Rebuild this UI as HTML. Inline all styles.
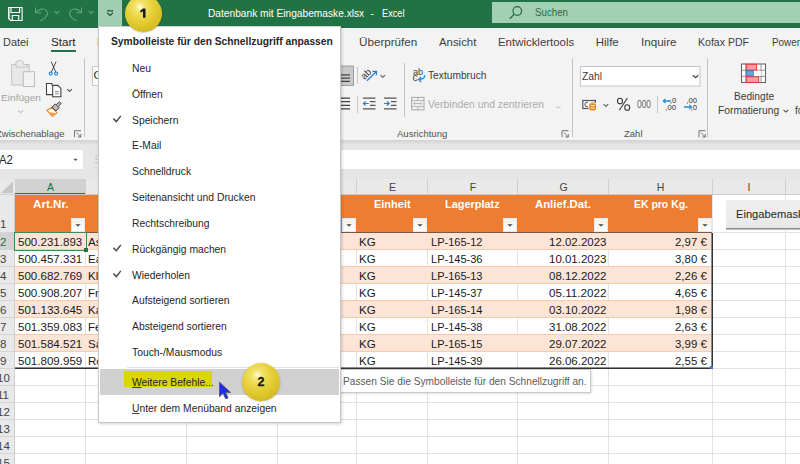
<!DOCTYPE html>
<html><head><meta charset="utf-8"><title>Excel</title>
<style>
html,body{margin:0;padding:0;}
body{width:800px;height:464px;overflow:hidden;position:relative;background:#fff;font-family:"Liberation Sans",sans-serif;}
.a{position:absolute;}
.t{position:absolute;white-space:nowrap;line-height:1;transform-origin:0 0;font-family:"Liberation Sans",sans-serif;}
svg{position:absolute;overflow:visible;}

</style></head><body>
<!-- title bar -->
<div class="a" style="left:0;top:0;width:800px;height:28px;background:#217346"></div>
<div class="a" style="left:98px;top:0;width:24px;height:26px;background:#a1cfb0"></div>
<div class="a" style="left:492px;top:2px;width:310px;height:21px;background:#a3d0b2"></div>
<div class="a" style="left:0;top:26px;width:800px;height:2px;background:#1f6f43"></div>
<div class="a" style="left:0;top:28px;width:800px;height:1px;background:#fafafa"></div>
<svg style="left:0;top:0" width="130" height="27">
 <g fill="none" stroke="#ffffff" stroke-width="1.1">
  <path d="M8.6 7.5h13.5v13h-11.5l-2-2z"/>
  <path d="M11 7.5v5h8.6v-5"/>
  <path d="M12.3 20.5v-5h6.4v5"/>
  <path d="M9.6 8.5v11" stroke-opacity="0.5"/>
 </g>
 <g fill="none" stroke="#62a37c" stroke-width="1.1">
  <path d="M35.5 7.5v5.2h5.5"/>
  <path d="M35.8 12.4c3-3.5 7.5-4.5 10.2-2 c2.3 2.3 1.4 5.2 -0.8 7.5l-5 3.2"/>
  <path d="M54.5 11.2l2.3 2.3l2.3-2.3"/>
  <path d="M81.5 7.5v5.2h-5.5"/>
  <path d="M81.2 12.4c-3-3.5 -7.5-4.5 -10.2-2 c-2.3 2.3 -1.4 5.2 0.8 7.5l5 3.2"/>
  <path d="M89 11.2l2.3 2.3l2.3-2.3"/>
 </g>
 <path d="M107 10.8h6.3" stroke="#1d5c37" stroke-width="1.3"/>
 <path d="M107.2 12.8l2.9 2.6l2.9-2.6" fill="none" stroke="#1d5c37" stroke-width="1.3"/>
</svg>
<svg style="left:500px;top:0" width="30" height="27">
 <circle cx="17.3" cy="11" r="4.3" fill="none" stroke="#2a6a43" stroke-width="1.2"/>
 <path d="M14.3 14.2l-4.6 4.6" stroke="#2a6a43" stroke-width="1.3"/>
</svg>
<!-- tabs + ribbon -->
<div class="a" style="left:0;top:28px;width:800px;height:112px;background:#f3f3f3"></div>
<div class="a" style="left:51px;top:50px;width:25px;height:2px;background:#217346"></div>
<!-- ribbon icons -->
<svg style="left:0;top:55px" width="800" height="90">
 <!-- separators -->
 <g fill="#c6c6c6">
  <rect x="84" y="3" width="1" height="79"/>
  <rect x="404" y="8" width="1" height="54"/>
  <rect x="572" y="3" width="1" height="79"/>
  <rect x="707" y="3" width="1" height="79"/>
  <rect x="357" y="12" width="1" height="17"/>
  <rect x="357" y="41" width="1" height="17"/>
  <rect x="657" y="41" width="1" height="17"/>
 </g>
 <!-- clipboard (disabled) -->
 <path d="M11.7 9.5h4.2v-1.6a2.2 2.2 0 0 1 2.2-2.2h3a2.2 2.2 0 0 1 2.2 2.2v1.6h5.9v20.5h-17.5z" fill="#e8e8e8" stroke="#c3c3c3" stroke-width="1"/>
 <path d="M16 9.5v2.6h11.2v-2.6" fill="none" stroke="#c3c3c3" stroke-width="1"/>
 <rect x="23.3" y="16.7" width="11.2" height="14.8" fill="#f2f2f2" stroke="#bdbdbd" stroke-width="1"/>
 <path d="M18 55.5l2.6 2.2l2.6-2.2" fill="none" stroke="#b0b0b0" stroke-width="1"/>
 <!-- scissors -->
 <path d="M51.2 6.6l4.6 10.6M56 6.6l-4.6 10.6" stroke="#3a3a3a" stroke-width="0.9" fill="none"/>
 <circle cx="50.7" cy="18.6" r="1.5" fill="none" stroke="#2b8ad8" stroke-width="1.2"/>
 <circle cx="56.2" cy="18.6" r="1.5" fill="none" stroke="#2b8ad8" stroke-width="1.2"/>
 <!-- copy -->
 <path d="M52.4 39.6h-5.9v-11.1h5.4v2" fill="#fff" stroke="#444" stroke-width="1.1"/>
 <path d="M52.7 30.4h5.2l3 3v8.4h-8.2z" fill="#fff" stroke="#444" stroke-width="1.1"/>
 <path d="M55 36.6h3.8M55 38.8h3.8" stroke="#777" stroke-width="0.9"/>
 <path d="M67.3 34.2l2.3 2.2l2.3-2.2" fill="none" stroke="#555" stroke-width="1.1"/>
 <!-- format painter -->
 <path d="M47 55.3l5.2-3l4.8 5.6l-4.6 3.5z" fill="#fff" stroke="#e8821e" stroke-width="1.1" stroke-linejoin="round"/>
 <path d="M49.5 57.2l6.6 0.9l-3.7 2.9z" fill="#f0a04a"/>
 <path d="M52 52.2l3.3-3.3l3.8 3.8l-3.3 3.3z" fill="#bdbdbd" stroke="#3a3a3a" stroke-width="1"/>
 <path d="M56.2 49.8l2.3-2.3a1.3 1.3 0 0 1 1.9 1.9l-2.3 2.3" fill="#bdbdbd" stroke="#3a3a3a" stroke-width="1"/>
 <!-- launchers -->
 <g fill="none" stroke="#666" stroke-width="0.9">
  <path d="M74.5 82.2v-6.5h6.5"/><path d="M76.5 77.7l4.2 4.2M77.8 82h3v-3"/>
  <path d="M562 82.2v-6.5h6.5"/><path d="M564 77.7l4.2 4.2M565.3 82h3v-3"/>
  <path d="M699 82.2v-6.5h6.5"/><path d="M701 77.7l4.2 4.2M702.3 82h3v-3"/>
 </g>
 <!-- font name box partial -->
 <rect x="92.5" y="11.5" width="10" height="19" fill="#fff" stroke="#c6c6c6"/>
 <!-- pressed align-right -->
 <rect x="335.5" y="11" width="18" height="19.5" fill="#c9c9c9" stroke="#9e9e9e"/>
 <path d="M341 19.9h9M341 23.1h9M341 26.3h9" stroke="#444" stroke-width="1.2"/>
 <path d="M341 43.2h9M341 46.7h9M341 50.3h9M341 53.9h9" stroke="#444" stroke-width="1.2"/>
 <!-- orientation -->
 <text x="0" y="0" transform="translate(364.6 25) rotate(-45)" font-family="Liberation Sans" font-size="9.5" fill="#333">ab</text>
 <path d="M367 25.7l9-9" stroke="#2b7cd3" stroke-width="1.3"/>
 <path d="M372.5 16.4h3.9v3.9" fill="none" stroke="#2b7cd3" stroke-width="1.3"/>
 <path d="M380.5 20.2l2.3 2.1l2.3-2.1" fill="none" stroke="#555" stroke-width="1.1"/>
 <!-- indent decrease -->
 <path d="M363 43.2h12.5M370 46.7h5.5M370 50.3h5.5M363 53.9h12.5" stroke="#555" stroke-width="1.2"/>
 <path d="M368.7 48.5h-5.2M365.6 46.3l-2.2 2.2l2.2 2.2" fill="none" stroke="#2b7cd3" stroke-width="1.2"/>
 <!-- indent increase -->
 <path d="M384 43.2h12.5M391 46.7h5.5M391 50.3h5.5M384 53.9h12.5" stroke="#555" stroke-width="1.2"/>
 <path d="M384 48.5h5.2M387 46.3l2.2 2.2l-2.2 2.2" fill="none" stroke="#2b7cd3" stroke-width="1.2"/>
 <!-- wrap text -->
 <text x="413" y="19.7" font-family="Liberation Sans" font-size="9.5" fill="#444" textLength="10.2" lengthAdjust="spacingAndGlyphs">ab</text>
 <text x="412.6" y="26.4" font-family="Liberation Sans" font-size="10.5" fill="#444">c</text>
 <path d="M424.5 20.2c0.6 2.6-1.3 4.3-5.4 4.3" fill="none" stroke="#2b8ad8" stroke-width="1.4"/>
 <path d="M421.2 22l-2.5 2.5l2.5 2.4" fill="none" stroke="#2b8ad8" stroke-width="1.4"/>
 <!-- merge (disabled) -->
 <rect x="411.6" y="42.4" width="12.4" height="12.4" fill="none" stroke="#adadad" stroke-width="1.1"/>
 <path d="M411.6 45.6h12.4M411.6 51.6h12.4M417.8 42.4v3.2M417.8 51.6v3.2" stroke="#adadad" stroke-width="0.9"/>
 <path d="M413.6 48.6h8.4M415.2 47l-1.6 1.6l1.6 1.6M420.4 47l1.6 1.6l-1.6 1.6" fill="none" stroke="#adadad" stroke-width="0.9"/>
 <path d="M556 51.2l2.3 2.1l2.3-2.1" fill="none" stroke="#bdbdbd" stroke-width="1"/>
 <!-- number format box -->
 <rect x="580.5" y="11.5" width="119.5" height="19.5" fill="#fff" stroke="#c6c6c6"/>
 <path d="M692.8 20.2l2.7 2.5l2.7-2.5" fill="none" stroke="#444" stroke-width="1.2"/>
 <!-- currency -->
 <rect x="582.8" y="45.5" width="12.6" height="8" fill="#fff" stroke="#555" stroke-width="1.2"/>
 <path d="M588 47.3a2.3 2.3 0 1 0 0 4.4" fill="none" stroke="#555" stroke-width="1.1"/>
 <path d="M591 47.3h4" stroke="#777" stroke-width="0.9"/>
 <rect x="588.6" y="47.6" width="8" height="8.6" rx="2" fill="#fff"/>
 <rect x="589.2" y="48.2" width="6.8" height="7.4" rx="1.8" fill="#e8821e"/>
 <path d="M590.5 50.6h4.2M590.5 53h4.2" stroke="#fff" stroke-width="1"/>
 <path d="M603.7 49.2l2.3 2.1l2.3-2.1" fill="none" stroke="#555" stroke-width="1.1"/>
 <!-- percent -->
 <ellipse cx="620" cy="46" rx="2.5" ry="2.8" fill="none" stroke="#3a3a3a" stroke-width="1.1"/>
 <ellipse cx="627.2" cy="52.5" rx="2.5" ry="2.8" fill="none" stroke="#3a3a3a" stroke-width="1.1"/>
 <path d="M627.4 43l-8 12.2" stroke="#3a3a3a" stroke-width="1.1"/>
 <!-- decimals -->
 <path d="M671 46h-7.6M665.5 43.9l-2.2 2.1l2.2 2.1" fill="none" stroke="#2b8ad8" stroke-width="1.3"/>
 <text x="670" y="47.6" font-family="Liberation Sans" font-size="7.6" fill="#2a2a2a">,0</text>
 <text x="665.3" y="54.8" font-family="Liberation Sans" font-size="7.6" fill="#2a2a2a">,00</text>
 <text x="686.3" y="47.6" font-family="Liberation Sans" font-size="7.6" fill="#2a2a2a">,00</text>
 <path d="M684 52h7.4M689.3 49.9l2.2 2.1l-2.2 2.1" fill="none" stroke="#2b8ad8" stroke-width="1.3"/>
 <text x="690.6" y="54.8" font-family="Liberation Sans" font-size="7.6" fill="#2a2a2a">,0</text>
 <!-- conditional formatting -->
 <rect x="741.5" y="9" width="24" height="18.5" fill="#fff" stroke="#666" stroke-width="1.1"/>
 <path d="M741.5 15.3h24M741.5 21.4h24M761 9v18.5M745.8 9v18.5" stroke="#888" stroke-width="0.9" fill="none"/>
 <rect x="746.3" y="9.3" width="10.3" height="5.8" fill="#ff9ca4" stroke="#e03a3a" stroke-width="1"/>
 <rect x="746.3" y="15.8" width="7.3" height="5.2" fill="#64a4dc" stroke="#2b78c8" stroke-width="0.9"/>
 <rect x="753.8" y="15.8" width="7" height="5.2" fill="#fff"/>
 <rect x="746.3" y="21.8" width="12.4" height="5.6" fill="#ff9ca4" stroke="#e03a3a" stroke-width="1"/>
 <path d="M783.6 55l2.3 2.1l2.3-2.1" fill="none" stroke="#555" stroke-width="1.1"/>
</svg>
<div class="a" style="left:0;top:140px;width:800px;height:5px;background:linear-gradient(#d2d2d2,#e6e6e6)"></div>
<!-- formula bar area -->
<div class="a" style="left:0;top:145px;width:800px;height:34px;background:#e6e6e6"></div>
<div class="a" style="left:0;top:150px;width:83px;height:19px;background:#fff"></div>
<div class="a" style="left:104px;top:150px;width:700px;height:19px;background:#fff"></div>
<!-- column header row -->
<div class="a" style="left:0;top:179px;width:800px;height:16px;background:#e9e9e9;border-bottom:0"></div>
<div class="a" style="left:15px;top:179px;width:71px;height:14px;background:#d2d2d2;border-bottom:2px solid #217346"></div>
<!-- row header column -->
<div class="a" style="left:0;top:195px;width:14px;height:269px;background:#e9e9e9"></div>
<div class="a" style="left:0;top:232px;width:14px;height:17px;background:#d2d2d2"></div>
<!-- GRID -->
<div class="a" style="left:14px;top:232px;width:786px;height:1px;background:#e2e2e2;"></div>
<div class="a" style="left:14px;top:249px;width:786px;height:1px;background:#e2e2e2;"></div>
<div class="a" style="left:14px;top:266px;width:786px;height:1px;background:#e2e2e2;"></div>
<div class="a" style="left:14px;top:283px;width:786px;height:1px;background:#e2e2e2;"></div>
<div class="a" style="left:14px;top:300px;width:786px;height:1px;background:#e2e2e2;"></div>
<div class="a" style="left:14px;top:317px;width:786px;height:1px;background:#e2e2e2;"></div>
<div class="a" style="left:14px;top:334px;width:786px;height:1px;background:#e2e2e2;"></div>
<div class="a" style="left:14px;top:351px;width:786px;height:1px;background:#e2e2e2;"></div>
<div class="a" style="left:14px;top:368px;width:786px;height:1px;background:#e2e2e2;"></div>
<div class="a" style="left:14px;top:385px;width:786px;height:1px;background:#e2e2e2;"></div>
<div class="a" style="left:14px;top:402px;width:786px;height:1px;background:#e2e2e2;"></div>
<div class="a" style="left:14px;top:419px;width:786px;height:1px;background:#e2e2e2;"></div>
<div class="a" style="left:14px;top:436px;width:786px;height:1px;background:#e2e2e2;"></div>
<div class="a" style="left:14px;top:453px;width:786px;height:1px;background:#e2e2e2;"></div>
<div class="a" style="left:85px;top:195px;width:1px;height:269px;background:#e2e2e2;"></div>
<div class="a" style="left:186px;top:195px;width:1px;height:269px;background:#e2e2e2;"></div>
<div class="a" style="left:277px;top:195px;width:1px;height:269px;background:#e2e2e2;"></div>
<div class="a" style="left:356px;top:195px;width:1px;height:269px;background:#e2e2e2;"></div>
<div class="a" style="left:427px;top:195px;width:1px;height:269px;background:#e2e2e2;"></div>
<div class="a" style="left:517px;top:195px;width:1px;height:269px;background:#e2e2e2;"></div>
<div class="a" style="left:608px;top:195px;width:1px;height:269px;background:#e2e2e2;"></div>
<div class="a" style="left:712px;top:195px;width:1px;height:269px;background:#e2e2e2;"></div>
<div class="a" style="left:785px;top:195px;width:1px;height:269px;background:#e2e2e2;"></div>
<div class="a" style="left:85px;top:179px;width:1px;height:15px;background:#cfcfcf;"></div>
<div class="a" style="left:186px;top:179px;width:1px;height:15px;background:#cfcfcf;"></div>
<div class="a" style="left:277px;top:179px;width:1px;height:15px;background:#cfcfcf;"></div>
<div class="a" style="left:356px;top:179px;width:1px;height:15px;background:#cfcfcf;"></div>
<div class="a" style="left:427px;top:179px;width:1px;height:15px;background:#cfcfcf;"></div>
<div class="a" style="left:517px;top:179px;width:1px;height:15px;background:#cfcfcf;"></div>
<div class="a" style="left:608px;top:179px;width:1px;height:15px;background:#cfcfcf;"></div>
<div class="a" style="left:712px;top:179px;width:1px;height:15px;background:#cfcfcf;"></div>
<div class="a" style="left:785px;top:179px;width:1px;height:15px;background:#cfcfcf;"></div>
<div class="a" style="left:0px;top:194px;width:800px;height:1px;background:#cdcdcd;"></div>
<div class="a" style="left:0px;top:232px;width:14px;height:1px;background:#d4d4d4;"></div>
<div class="a" style="left:0px;top:249px;width:14px;height:1px;background:#d4d4d4;"></div>
<div class="a" style="left:0px;top:266px;width:14px;height:1px;background:#d4d4d4;"></div>
<div class="a" style="left:0px;top:283px;width:14px;height:1px;background:#d4d4d4;"></div>
<div class="a" style="left:0px;top:300px;width:14px;height:1px;background:#d4d4d4;"></div>
<div class="a" style="left:0px;top:317px;width:14px;height:1px;background:#d4d4d4;"></div>
<div class="a" style="left:0px;top:334px;width:14px;height:1px;background:#d4d4d4;"></div>
<div class="a" style="left:0px;top:351px;width:14px;height:1px;background:#d4d4d4;"></div>
<div class="a" style="left:0px;top:368px;width:14px;height:1px;background:#d4d4d4;"></div>
<div class="a" style="left:0px;top:385px;width:14px;height:1px;background:#d4d4d4;"></div>
<div class="a" style="left:0px;top:402px;width:14px;height:1px;background:#d4d4d4;"></div>
<div class="a" style="left:0px;top:419px;width:14px;height:1px;background:#d4d4d4;"></div>
<div class="a" style="left:0px;top:436px;width:14px;height:1px;background:#d4d4d4;"></div>
<div class="a" style="left:0px;top:453px;width:14px;height:1px;background:#d4d4d4;"></div>
<div class="a" style="left:14px;top:195px;width:1px;height:269px;background:#cdcdcd;"></div>
<div class="a" style="left:15px;top:195px;width:697px;height:37px;background:#ed7d31;"></div>
<div class="a" style="left:15px;top:232px;width:697px;height:1px;background:#7a5844;"></div>
<div class="a" style="left:15px;top:233px;width:697px;height:16px;background:#fce4d6;"></div>
<div class="a" style="left:15px;top:249px;width:697px;height:1px;background:#f8cbad;"></div>
<div class="a" style="left:15px;top:266px;width:697px;height:1px;background:#f8cbad;"></div>
<div class="a" style="left:15px;top:267px;width:697px;height:16px;background:#fce4d6;"></div>
<div class="a" style="left:15px;top:283px;width:697px;height:1px;background:#f8cbad;"></div>
<div class="a" style="left:15px;top:300px;width:697px;height:1px;background:#f8cbad;"></div>
<div class="a" style="left:15px;top:301px;width:697px;height:16px;background:#fce4d6;"></div>
<div class="a" style="left:15px;top:317px;width:697px;height:1px;background:#f8cbad;"></div>
<div class="a" style="left:15px;top:334px;width:697px;height:1px;background:#f8cbad;"></div>
<div class="a" style="left:15px;top:335px;width:697px;height:16px;background:#fce4d6;"></div>
<div class="a" style="left:15px;top:351px;width:697px;height:1px;background:#f8cbad;"></div>
<div class="a" style="left:15px;top:368px;width:697px;height:1px;background:#f8cbad;"></div>
<div class="a" style="left:85px;top:250px;width:1px;height:16px;background:#e2e2e2;"></div>
<div class="a" style="left:186px;top:250px;width:1px;height:16px;background:#e2e2e2;"></div>
<div class="a" style="left:277px;top:250px;width:1px;height:16px;background:#e2e2e2;"></div>
<div class="a" style="left:356px;top:250px;width:1px;height:16px;background:#e2e2e2;"></div>
<div class="a" style="left:427px;top:250px;width:1px;height:16px;background:#e2e2e2;"></div>
<div class="a" style="left:517px;top:250px;width:1px;height:16px;background:#e2e2e2;"></div>
<div class="a" style="left:85px;top:284px;width:1px;height:16px;background:#e2e2e2;"></div>
<div class="a" style="left:186px;top:284px;width:1px;height:16px;background:#e2e2e2;"></div>
<div class="a" style="left:277px;top:284px;width:1px;height:16px;background:#e2e2e2;"></div>
<div class="a" style="left:356px;top:284px;width:1px;height:16px;background:#e2e2e2;"></div>
<div class="a" style="left:427px;top:284px;width:1px;height:16px;background:#e2e2e2;"></div>
<div class="a" style="left:517px;top:284px;width:1px;height:16px;background:#e2e2e2;"></div>
<div class="a" style="left:85px;top:318px;width:1px;height:16px;background:#e2e2e2;"></div>
<div class="a" style="left:186px;top:318px;width:1px;height:16px;background:#e2e2e2;"></div>
<div class="a" style="left:277px;top:318px;width:1px;height:16px;background:#e2e2e2;"></div>
<div class="a" style="left:356px;top:318px;width:1px;height:16px;background:#e2e2e2;"></div>
<div class="a" style="left:427px;top:318px;width:1px;height:16px;background:#e2e2e2;"></div>
<div class="a" style="left:517px;top:318px;width:1px;height:16px;background:#e2e2e2;"></div>
<div class="a" style="left:85px;top:352px;width:1px;height:16px;background:#e2e2e2;"></div>
<div class="a" style="left:186px;top:352px;width:1px;height:16px;background:#e2e2e2;"></div>
<div class="a" style="left:277px;top:352px;width:1px;height:16px;background:#e2e2e2;"></div>
<div class="a" style="left:356px;top:352px;width:1px;height:16px;background:#e2e2e2;"></div>
<div class="a" style="left:427px;top:352px;width:1px;height:16px;background:#e2e2e2;"></div>
<div class="a" style="left:517px;top:352px;width:1px;height:16px;background:#e2e2e2;"></div>
<div class="a" style="left:15px;top:367px;width:698px;height:1px;background:#8c8c8c;"></div>
<div class="a" style="left:15px;top:368px;width:698px;height:1px;background:#333333;"></div>
<div class="a" style="left:711px;top:233px;width:1px;height:135px;background:#8c8c8c;"></div>
<div class="a" style="left:712px;top:233px;width:1px;height:135px;background:#333333;"></div>
<div class="a" style="left:709.5px;top:365.5px;width:3.5px;height:3.5px;background:#4a6fd8;"></div>
<div class="a" style="left:71px;top:218px;width:14px;height:14px;background:linear-gradient(#eef1f4,#ffffff);box-shadow:inset 0 0 0 1px #e6e9ec"></div>
<svg style="left:71px;top:218px" width="14" height="14"><path d="M4.3 6.3h5.4l-2.7 2.3z" fill="#444"/></svg>
<div class="a" style="left:172px;top:218px;width:14px;height:14px;background:linear-gradient(#eef1f4,#ffffff);box-shadow:inset 0 0 0 1px #e6e9ec"></div>
<svg style="left:172px;top:218px" width="14" height="14"><path d="M4.3 6.3h5.4l-2.7 2.3z" fill="#444"/></svg>
<div class="a" style="left:263px;top:218px;width:14px;height:14px;background:linear-gradient(#eef1f4,#ffffff);box-shadow:inset 0 0 0 1px #e6e9ec"></div>
<svg style="left:263px;top:218px" width="14" height="14"><path d="M4.3 6.3h5.4l-2.7 2.3z" fill="#444"/></svg>
<div class="a" style="left:342px;top:218px;width:14px;height:14px;background:linear-gradient(#eef1f4,#ffffff);box-shadow:inset 0 0 0 1px #e6e9ec"></div>
<svg style="left:342px;top:218px" width="14" height="14"><path d="M4.3 6.3h5.4l-2.7 2.3z" fill="#444"/></svg>
<div class="a" style="left:413px;top:218px;width:14px;height:14px;background:linear-gradient(#eef1f4,#ffffff);box-shadow:inset 0 0 0 1px #e6e9ec"></div>
<svg style="left:413px;top:218px" width="14" height="14"><path d="M4.3 6.3h5.4l-2.7 2.3z" fill="#444"/></svg>
<div class="a" style="left:503px;top:218px;width:14px;height:14px;background:linear-gradient(#eef1f4,#ffffff);box-shadow:inset 0 0 0 1px #e6e9ec"></div>
<svg style="left:503px;top:218px" width="14" height="14"><path d="M4.3 6.3h5.4l-2.7 2.3z" fill="#444"/></svg>
<div class="a" style="left:594px;top:218px;width:14px;height:14px;background:linear-gradient(#eef1f4,#ffffff);box-shadow:inset 0 0 0 1px #e6e9ec"></div>
<svg style="left:594px;top:218px" width="14" height="14"><path d="M4.3 6.3h5.4l-2.7 2.3z" fill="#444"/></svg>
<div class="a" style="left:698px;top:218px;width:14px;height:14px;background:linear-gradient(#eef1f4,#ffffff);box-shadow:inset 0 0 0 1px #e6e9ec"></div>
<svg style="left:698px;top:218px" width="14" height="14"><path d="M4.3 6.3h5.4l-2.7 2.3z" fill="#444"/></svg>
<div class="a" style="left:14px;top:232px;width:70.5px;height:16.5px;background:transparent;border:1.5px solid #3d8a5a;box-sizing:content-box"></div>
<div class="a" style="left:84px;top:248px;width:3.5px;height:3.5px;background:#217346;"></div>
<!-- select all triangle -->
<svg style="left:0;top:179px" width="15" height="16"><path d="M13 2.5v11.5h-12z" fill="#c6c6c6"/></svg>
<svg style="left:0;top:145px" width="110" height="34">
 <path d="M73.3 13.8h4.4l-2.2 2.2z" fill="#555"/>
 <g fill="#a8a8a8"><rect x="95.5" y="10" width="1.2" height="1.2"/><rect x="95.5" y="13.5" width="1.2" height="1.2"/><rect x="95.5" y="17" width="1.2" height="1.2"/></g>
</svg>
<!-- Eingabemaske button -->
<div class="a" style="left:726px;top:200px;width:80px;height:28px;background:linear-gradient(#f0f0f0,#e8e8e8);border-bottom:1px solid #8a8a8a;box-shadow:0 1px 0 #c0c0c0"></div>
<div class="t" style="left:208.30px;top:8.11px;font-size:10.5px;color:#ffffff;transform:scaleX(0.9697);">Datenbank mit Eingabemaske.xlsx</div>
<div class="t" style="left:370.50px;top:8.11px;font-size:10.5px;color:#ffffff;">-</div>
<div class="t" style="left:381.50px;top:8.11px;font-size:10.5px;color:#ffffff;transform:scaleX(0.8763);">Excel</div>
<div class="t" style="left:535.00px;top:8.40px;font-size:10.4px;color:#2b6a44;transform:scaleX(0.9364);">Suchen</div>
<div class="t" style="left:2.50px;top:36.87px;font-size:11.5px;color:#404040;transform:scaleX(0.9498);">Datei</div>
<div class="t" style="left:51.00px;top:36.87px;font-size:11.5px;color:#262626;transform:scaleX(1.0088);">Start</div>
<div class="t" style="left:359.40px;top:36.87px;font-size:11.5px;color:#404040;transform:scaleX(1.0133);">Überprüfen</div>
<div class="t" style="left:438.75px;top:36.87px;font-size:11.5px;color:#404040;transform:scaleX(0.9891);">Ansicht</div>
<div class="t" style="left:497.50px;top:36.87px;font-size:11.5px;color:#404040;transform:scaleX(0.9936);">Entwicklertools</div>
<div class="t" style="left:595.75px;top:36.87px;font-size:11.5px;color:#404040;">Hilfe</div>
<div class="t" style="left:640.50px;top:36.87px;font-size:11.5px;color:#404040;transform:scaleX(1.0096);">Inquire</div>
<div class="t" style="left:698.00px;top:36.87px;font-size:11.5px;color:#404040;transform:scaleX(0.9172);">Kofax PDF</div>
<div class="t" style="left:772.00px;top:36.87px;font-size:11.5px;color:#404040;transform:scaleX(0.8600);">Power Pivot</div>
<div class="t" style="left:1.00px;top:92.90px;font-size:9.8px;color:#a3a3a3;transform:scaleX(1.0342);">Einfügen</div>
<div class="t" style="left:96.50px;top:36.87px;font-size:11.5px;color:#404040;transform:scaleX(0.9912);">Einfügen</div>
<div class="t" style="left:-4.50px;top:128.57px;font-size:9.6px;color:#505050;transform:scaleX(0.9880);">Zwischenablage</div>
<div class="t" style="left:428.30px;top:71.47px;font-size:10.2px;color:#3b3b3b;transform:scaleX(1.0031);">Textumbruch</div>
<div class="t" style="left:428.00px;top:100.27px;font-size:10.2px;color:#acacac;transform:scaleX(1.0190);">Verbinden und zentrieren</div>
<div class="t" style="left:396.50px;top:128.64px;font-size:9.4px;color:#505050;transform:scaleX(1.0140);">Ausrichtung</div>
<div class="t" style="left:582.00px;top:70.76px;font-size:10.8px;color:#3b3b3b;transform:scaleX(0.9522);">Zahl</div>
<div class="t" style="left:637.00px;top:99.58px;font-size:10.3px;color:#606060;transform:scaleX(0.8149);">000</div>
<div class="t" style="left:623.70px;top:128.74px;font-size:9.4px;color:#505050;transform:scaleX(1.0144);">Zahl</div>
<div class="t" style="left:733.90px;top:91.11px;font-size:10.5px;color:#3b3b3b;transform:scaleX(0.9674);">Bedingte</div>
<div class="t" style="left:718.40px;top:104.61px;font-size:10.5px;color:#3b3b3b;transform:scaleX(0.9785);">Formatierung</div>
<div class="t" style="left:794.60px;top:104.61px;font-size:10.5px;color:#3b3b3b;transform:scaleX(0.9300);">fo</div>
<div class="t" style="left:-1.00px;top:153.84px;font-size:12px;color:#262626;transform:scaleX(0.9500);">A2</div>
<div class="t" style="left:47.00px;top:182.11px;font-size:10.5px;color:#217346;">A</div>
<div class="t" style="left:389.00px;top:182.11px;font-size:10.5px;color:#444444;">E</div>
<div class="t" style="left:469.79px;top:182.11px;font-size:10.5px;color:#444444;">F</div>
<div class="t" style="left:559.42px;top:182.11px;font-size:10.5px;color:#444444;">G</div>
<div class="t" style="left:656.71px;top:182.11px;font-size:10.5px;color:#444444;">H</div>
<div class="t" style="left:747.54px;top:182.11px;font-size:10.5px;color:#444444;">I</div>
<div class="t" style="left:32.75px;top:199.11px;font-size:10.5px;color:#ffffff;font-weight:bold;transform:scaleX(1.1063);">Art.Nr.</div>
<div class="t" style="left:373.70px;top:199.11px;font-size:10.5px;color:#ffffff;font-weight:bold;transform:scaleX(1.0457);">Einheit</div>
<div class="t" style="left:445.00px;top:199.11px;font-size:10.5px;color:#ffffff;font-weight:bold;transform:scaleX(1.0398);">Lagerplatz</div>
<div class="t" style="left:535.00px;top:199.11px;font-size:10.5px;color:#ffffff;font-weight:bold;transform:scaleX(1.0786);">Anlief.Dat.</div>
<div class="t" style="left:633.60px;top:199.11px;font-size:10.5px;color:#ffffff;font-weight:bold;transform:scaleX(0.9954);">EK pro Kg.</div>
<div class="t" style="left:735.60px;top:209.47px;font-size:11.5px;color:#262626;transform:scaleX(0.9700);">Eingabemaske</div>
<div class="t" style="left:93.50px;top:70.27px;font-size:11.5px;color:#333333;">C</div>
<div class="t" style="left:-0.21px;top:219.19px;font-size:11px;color:#444444;transform:scaleX(1.0500);">1</div>
<div class="t" style="left:-0.21px;top:236.89px;font-size:11px;color:#217346;transform:scaleX(1.0500);">2</div>
<div class="t" style="left:-0.21px;top:253.89px;font-size:11px;color:#444444;transform:scaleX(1.0500);">3</div>
<div class="t" style="left:-0.21px;top:270.89px;font-size:11px;color:#444444;transform:scaleX(1.0500);">4</div>
<div class="t" style="left:-0.21px;top:287.89px;font-size:11px;color:#444444;transform:scaleX(1.0500);">5</div>
<div class="t" style="left:-0.21px;top:304.89px;font-size:11px;color:#444444;transform:scaleX(1.0500);">6</div>
<div class="t" style="left:-0.21px;top:321.89px;font-size:11px;color:#444444;transform:scaleX(1.0500);">7</div>
<div class="t" style="left:-0.21px;top:338.89px;font-size:11px;color:#444444;transform:scaleX(1.0500);">8</div>
<div class="t" style="left:-0.21px;top:355.89px;font-size:11px;color:#444444;transform:scaleX(1.0500);">9</div>
<div class="t" style="left:-3.42px;top:372.89px;font-size:11px;color:#444444;transform:scaleX(1.0500);">10</div>
<div class="t" style="left:-2.99px;top:389.89px;font-size:11px;color:#444444;transform:scaleX(1.0500);">11</div>
<div class="t" style="left:-3.42px;top:406.89px;font-size:11px;color:#444444;transform:scaleX(1.0500);">12</div>
<div class="t" style="left:-3.42px;top:423.89px;font-size:11px;color:#444444;transform:scaleX(1.0500);">13</div>
<div class="t" style="left:-3.42px;top:440.89px;font-size:11px;color:#444444;transform:scaleX(1.0500);">14</div>
<div class="t" style="left:-3.42px;top:457.89px;font-size:11px;color:#444444;transform:scaleX(1.0500);">15</div>
<div class="t" style="left:17.50px;top:236.89px;font-size:11px;color:#1a1a1a;transform:scaleX(1.0511);">500.231.893</div>
<div class="t" style="left:88.00px;top:236.89px;font-size:11px;color:#1a1a1a;transform:scaleX(1.0500);">As</div>
<div class="t" style="left:358.75px;top:236.89px;font-size:11px;color:#1a1a1a;transform:scaleX(1.0500);">KG</div>
<div class="t" style="left:430.50px;top:236.89px;font-size:11px;color:#1a1a1a;transform:scaleX(1.0025);">LP-165-12</div>
<div class="t" style="left:548.75px;top:236.89px;font-size:11px;color:#1a1a1a;transform:scaleX(1.0444);">12.02.2023</div>
<div class="t" style="left:674.50px;top:236.89px;font-size:11px;color:#1a1a1a;transform:scaleX(1.0382);">2,97 €</div>
<div class="t" style="left:17.50px;top:253.89px;font-size:11px;color:#1a1a1a;transform:scaleX(1.0511);">500.457.331</div>
<div class="t" style="left:88.00px;top:253.89px;font-size:11px;color:#1a1a1a;transform:scaleX(1.0500);">Ea</div>
<div class="t" style="left:358.75px;top:253.89px;font-size:11px;color:#1a1a1a;transform:scaleX(1.0500);">KG</div>
<div class="t" style="left:430.50px;top:253.89px;font-size:11px;color:#1a1a1a;transform:scaleX(1.0025);">LP-145-36</div>
<div class="t" style="left:548.75px;top:253.89px;font-size:11px;color:#1a1a1a;transform:scaleX(1.0444);">10.01.2023</div>
<div class="t" style="left:674.50px;top:253.89px;font-size:11px;color:#1a1a1a;transform:scaleX(1.0382);">3,80 €</div>
<div class="t" style="left:17.50px;top:270.89px;font-size:11px;color:#1a1a1a;transform:scaleX(1.0511);">500.682.769</div>
<div class="t" style="left:88.00px;top:270.89px;font-size:11px;color:#1a1a1a;transform:scaleX(1.0500);">Kl</div>
<div class="t" style="left:358.75px;top:270.89px;font-size:11px;color:#1a1a1a;transform:scaleX(1.0500);">KG</div>
<div class="t" style="left:430.50px;top:270.89px;font-size:11px;color:#1a1a1a;transform:scaleX(1.0025);">LP-165-13</div>
<div class="t" style="left:548.75px;top:270.89px;font-size:11px;color:#1a1a1a;transform:scaleX(1.0444);">08.12.2022</div>
<div class="t" style="left:674.50px;top:270.89px;font-size:11px;color:#1a1a1a;transform:scaleX(1.0382);">2,26 €</div>
<div class="t" style="left:17.50px;top:287.89px;font-size:11px;color:#1a1a1a;transform:scaleX(1.0511);">500.908.207</div>
<div class="t" style="left:88.00px;top:287.89px;font-size:11px;color:#1a1a1a;transform:scaleX(1.0500);">Fr</div>
<div class="t" style="left:358.75px;top:287.89px;font-size:11px;color:#1a1a1a;transform:scaleX(1.0500);">KG</div>
<div class="t" style="left:430.50px;top:287.89px;font-size:11px;color:#1a1a1a;transform:scaleX(1.0025);">LP-145-37</div>
<div class="t" style="left:548.75px;top:287.89px;font-size:11px;color:#1a1a1a;transform:scaleX(1.0602);">05.11.2022</div>
<div class="t" style="left:674.50px;top:287.89px;font-size:11px;color:#1a1a1a;transform:scaleX(1.0382);">4,65 €</div>
<div class="t" style="left:17.50px;top:304.89px;font-size:11px;color:#1a1a1a;transform:scaleX(1.0511);">501.133.645</div>
<div class="t" style="left:88.00px;top:304.89px;font-size:11px;color:#1a1a1a;transform:scaleX(1.0500);">Ka</div>
<div class="t" style="left:358.75px;top:304.89px;font-size:11px;color:#1a1a1a;transform:scaleX(1.0500);">KG</div>
<div class="t" style="left:430.50px;top:304.89px;font-size:11px;color:#1a1a1a;transform:scaleX(1.0025);">LP-165-14</div>
<div class="t" style="left:548.75px;top:304.89px;font-size:11px;color:#1a1a1a;transform:scaleX(1.0444);">03.10.2022</div>
<div class="t" style="left:674.50px;top:304.89px;font-size:11px;color:#1a1a1a;transform:scaleX(1.0382);">1,98 €</div>
<div class="t" style="left:17.50px;top:321.89px;font-size:11px;color:#1a1a1a;transform:scaleX(1.0511);">501.359.083</div>
<div class="t" style="left:88.00px;top:321.89px;font-size:11px;color:#1a1a1a;transform:scaleX(1.0500);">Fe</div>
<div class="t" style="left:358.75px;top:321.89px;font-size:11px;color:#1a1a1a;transform:scaleX(1.0500);">KG</div>
<div class="t" style="left:430.50px;top:321.89px;font-size:11px;color:#1a1a1a;transform:scaleX(1.0025);">LP-145-38</div>
<div class="t" style="left:548.75px;top:321.89px;font-size:11px;color:#1a1a1a;transform:scaleX(1.0444);">31.08.2022</div>
<div class="t" style="left:674.50px;top:321.89px;font-size:11px;color:#1a1a1a;transform:scaleX(1.0382);">2,63 €</div>
<div class="t" style="left:17.50px;top:338.89px;font-size:11px;color:#1a1a1a;transform:scaleX(1.0511);">501.584.521</div>
<div class="t" style="left:88.00px;top:338.89px;font-size:11px;color:#1a1a1a;transform:scaleX(1.0500);">Sa</div>
<div class="t" style="left:358.75px;top:338.89px;font-size:11px;color:#1a1a1a;transform:scaleX(1.0500);">KG</div>
<div class="t" style="left:430.50px;top:338.89px;font-size:11px;color:#1a1a1a;transform:scaleX(1.0025);">LP-165-15</div>
<div class="t" style="left:548.75px;top:338.89px;font-size:11px;color:#1a1a1a;transform:scaleX(1.0444);">29.07.2022</div>
<div class="t" style="left:674.50px;top:338.89px;font-size:11px;color:#1a1a1a;transform:scaleX(1.0382);">3,99 €</div>
<div class="t" style="left:17.50px;top:355.89px;font-size:11px;color:#1a1a1a;transform:scaleX(1.0511);">501.809.959</div>
<div class="t" style="left:88.00px;top:355.89px;font-size:11px;color:#1a1a1a;transform:scaleX(1.0500);">Ro</div>
<div class="t" style="left:358.75px;top:355.89px;font-size:11px;color:#1a1a1a;transform:scaleX(1.0500);">KG</div>
<div class="t" style="left:430.50px;top:355.89px;font-size:11px;color:#1a1a1a;transform:scaleX(1.0025);">LP-145-39</div>
<div class="t" style="left:548.75px;top:355.89px;font-size:11px;color:#1a1a1a;transform:scaleX(1.0444);">26.06.2022</div>
<div class="t" style="left:674.50px;top:355.89px;font-size:11px;color:#1a1a1a;transform:scaleX(1.0382);">2,55 €</div>
<!-- tooltip -->
<div class="a" style="left:339px;top:369px;width:250px;height:22px;background:#fff;border:1px solid #cacaca;box-shadow:1px 1px 2px rgba(0,0,0,0.12)"></div>
<!-- menu -->
<div class="a" style="left:98px;top:26px;width:241px;height:395px;background:#fff;border:1px solid #c6c6c6;border-top:1px solid #d0d0d0;box-shadow:1px 1px 3px rgba(0,0,0,0.18)"></div>
<div class="a" style="left:100px;top:369px;width:239px;height:25.5px;background:#d0d0d0"></div>
<div class="a" style="left:127px;top:367px;width:212px;height:1px;background:#e1e1e1"></div>
<div class="a" style="left:123.6px;top:371px;width:88.6px;height:15.6px;background:#d8d800"></div>
<svg style="left:0;top:0" width="400" height="464"><path d="M113.4 118.6L116.3 121.6L120.8 115.9" fill="none" stroke="#444" stroke-width="1.4"/><path d="M113.4 247.7L116.3 250.7L120.8 245.0" fill="none" stroke="#444" stroke-width="1.4"/><path d="M113.4 273.6L116.3 276.6L120.8 270.9" fill="none" stroke="#444" stroke-width="1.4"/>
<rect x="132" y="387" width="9.5" height="0.9" fill="#333"/>
<rect x="132" y="413" width="7.5" height="0.9" fill="#333"/>
</svg>
<div class="t" style="left:111.20px;top:35.69px;font-size:11px;color:#262626;font-weight:bold;transform:scaleX(0.9328);">Symbolleiste für den Schnellzugriff anpassen</div>
<div class="t" style="left:131.70px;top:62.99px;font-size:11px;color:#262626;transform:scaleX(0.9384);">Neu</div>
<div class="t" style="left:131.70px;top:88.81px;font-size:11px;color:#262626;transform:scaleX(0.9384);">Öffnen</div>
<div class="t" style="left:131.70px;top:114.63px;font-size:11px;color:#262626;transform:scaleX(0.9384);">Speichern</div>
<div class="t" style="left:131.70px;top:140.45px;font-size:11px;color:#262626;transform:scaleX(0.9384);">E-Mail</div>
<div class="t" style="left:131.70px;top:166.27px;font-size:11px;color:#262626;transform:scaleX(0.9384);">Schnelldruck</div>
<div class="t" style="left:131.70px;top:192.09px;font-size:11px;color:#262626;transform:scaleX(0.9384);">Seitenansicht und Drucken</div>
<div class="t" style="left:131.70px;top:217.91px;font-size:11px;color:#262626;transform:scaleX(0.9384);">Rechtschreibung</div>
<div class="t" style="left:131.70px;top:243.73px;font-size:11px;color:#262626;transform:scaleX(0.9384);">Rückgängig machen</div>
<div class="t" style="left:131.70px;top:269.55px;font-size:11px;color:#262626;transform:scaleX(0.9384);">Wiederholen</div>
<div class="t" style="left:131.70px;top:295.37px;font-size:11px;color:#262626;transform:scaleX(0.9384);">Aufsteigend sortieren</div>
<div class="t" style="left:131.70px;top:321.19px;font-size:11px;color:#262626;transform:scaleX(0.9384);">Absteigend sortieren</div>
<div class="t" style="left:131.70px;top:347.01px;font-size:11px;color:#262626;transform:scaleX(0.9384);">Touch-/Mausmodus</div>
<div class="t" style="left:131.70px;top:376.89px;font-size:11px;color:#262626;transform:scaleX(0.9384);">Weitere Befehle...</div>
<div class="t" style="left:131.70px;top:402.89px;font-size:11px;color:#262626;transform:scaleX(0.9384);">Unter dem Menüband anzeigen</div>
<div class="t" style="left:343.40px;top:375.69px;font-size:11px;color:#5a5a5a;transform:scaleX(0.9251);">Passen Sie die Symbolleiste für den Schnellzugriff an.</div>
<!-- cursor -->
<svg style="left:218px;top:381px" width="16" height="20">
 <path d="M1.5 1.2v14.5l3.6-3.4l2.6 5.6l2.4-1.1l-2.5-5.4h5z" fill="#1d2fe0" stroke="#5a5a6a" stroke-width="0.9" stroke-linejoin="round"/>
</svg>
<!-- badges -->
<div class="a" style="left:124.6px;top:-5.4px;width:37.6px;height:37.6px;border-radius:50%;background:radial-gradient(circle at 40% 32%,#fffbe2 0%,#f3e46c 14%,#e6d03a 40%,#d9be24 70%,#c2a418 90%,#8f7d14 100%);box-shadow:0 0.5px 1.5px rgba(60,50,0,0.45)"></div>
<div class="a" style="left:242px;top:363px;width:38px;height:38px;border-radius:50%;background:radial-gradient(circle at 40% 32%,#fffbe2 0%,#f3e46c 14%,#e6d03a 40%,#d9be24 70%,#c2a418 90%,#8f7d14 100%);box-shadow:0 0.5px 1.5px rgba(60,50,0,0.45)"></div>
<svg style="left:0;top:0" width="200" height="40"><path d="M143 8.6h2.5v9.1h-2.5v-6.4c-0.7 0.6-1.6 1.1-2.6 1.4v-2.3c1.1-0.4 2-1 2.6-1.8z" fill="#1a1a1a"/></svg>
<div class="t" style="left:257.52px;top:376.02px;font-size:12.5px;color:#1a1a1a;font-weight:bold;-webkit-text-stroke:0.3px #1a1a1a;">2</div>

</body></html>
